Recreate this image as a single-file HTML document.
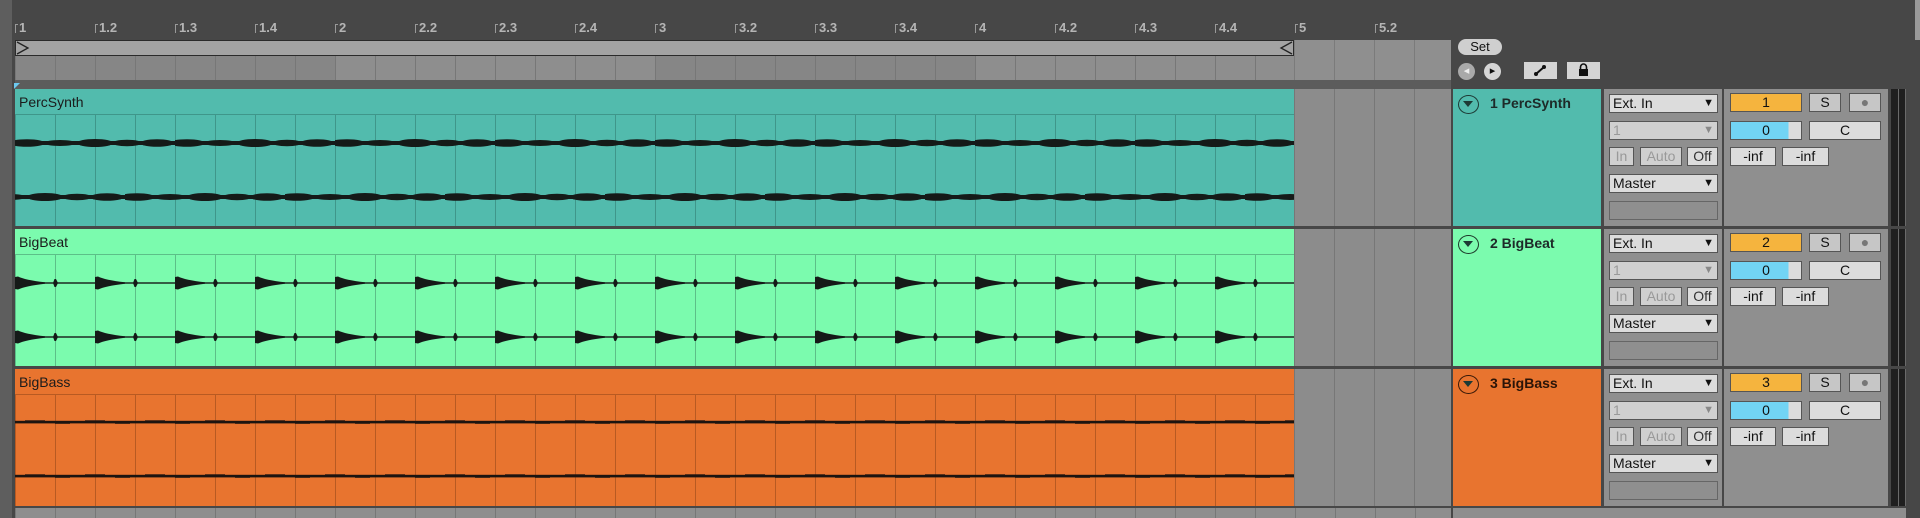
<!DOCTYPE html>
<html><head><meta charset="utf-8"><style>
*{margin:0;padding:0;box-sizing:border-box}
body{width:1920px;height:518px;background:#474747;position:relative;overflow:hidden;font-family:"Liberation Sans",sans-serif}
.a{position:absolute}
.rl{position:absolute;top:20px;font-size:13px;font-weight:bold;color:#b5b5b5;letter-spacing:0}
.rl:before{content:"";position:absolute;left:-4px;top:4px;width:1px;height:9px;background:#999}
.rl:after{content:"";position:absolute;left:-4px;top:4px;width:3px;height:1px;background:#999}
.track{position:absolute;left:15px;width:1279px;height:137px}
.hdr{position:absolute;left:0;top:0;width:100%;height:26px;font-size:14px;color:#1b1b1b;padding:5px 0 0 4px}
.grid{position:absolute;left:0;top:26px;width:100%;height:111px}
.ext{position:absolute;left:1294px;width:157px;height:137px;background:#8c8c8c;background-image:repeating-linear-gradient(90deg,#777 0 1px,transparent 1px 40px)}
.th{position:absolute;left:1453px;width:148px;height:137px}
.th .nm{position:absolute;left:37px;top:6px;font-size:14px;font-weight:bold;color:#1d2a28}
.th .ic{position:absolute;left:5px;top:6px;width:21px;height:19px;border:1.5px solid #1d3a35;border-radius:50%}
.th .ic:after{content:"";position:absolute;left:4px;top:5px;border-left:5px solid transparent;border-right:5px solid transparent;border-top:6px solid #1d3a35}
.io{position:absolute;left:1604px;width:118px;height:137px;background:#8f8f8f}
.mx{position:absolute;left:1724px;width:164px;height:137px;background:#8f8f8f}
.b{position:absolute;background:#dcdcdc;border:1px solid #555;font-size:14px;color:#111;height:19px;line-height:17px;padding-left:3px}
.b.dd:after{content:"▼";position:absolute;right:3px;top:0;font-size:11px;color:#111}
.b.dis{color:#999;background:#d0d0d0}
.b.dis:after{color:#888}
.c{text-align:center;padding:0}
.mt{position:absolute;left:1891px;width:15px;height:137px;background:#1f1f1f}
.mt:before,.mt:after{content:"";position:absolute;top:0;width:1px;height:100%;background:#6a6a6a}
.mt:before{left:7px}.mt:after{left:14px}
</style></head><body>
<div class="a" style="left:1915px;top:0;width:5px;height:40px;background:#9a9a9a"></div>
<div class="a" style="left:0;top:0;width:12px;height:518px;background:#5e5e5e"></div>
<div class="rl" style="left:19px">1</div><div class="rl" style="left:99px">1.2</div><div class="rl" style="left:179px">1.3</div><div class="rl" style="left:259px">1.4</div>
<div class="rl" style="left:339px">2</div><div class="rl" style="left:419px">2.2</div><div class="rl" style="left:499px">2.3</div><div class="rl" style="left:579px">2.4</div>
<div class="rl" style="left:659px">3</div><div class="rl" style="left:739px">3.2</div><div class="rl" style="left:819px">3.3</div><div class="rl" style="left:899px">3.4</div>
<div class="rl" style="left:979px">4</div><div class="rl" style="left:1059px">4.2</div><div class="rl" style="left:1139px">4.3</div><div class="rl" style="left:1219px">4.4</div>
<div class="rl" style="left:1299px">5</div><div class="rl" style="left:1379px">5.2</div>
<div class="a" style="left:15px;top:40px;width:1279px;height:16px;background:#a3a3a3;border:1px solid #2a2a2a"></div>
<svg class="a" style="left:15px;top:40px" width="1279" height="16"><path d="M2 2 L13 8 L2 14" fill="none" stroke="#222" stroke-width="1.3"/><path d="M1277 2 L1266 8 L1277 14" fill="none" stroke="#222" stroke-width="1.3"/></svg>
<div class="a" style="left:1294px;top:40px;width:157px;height:40px;background:#8f8f8f;background-image:repeating-linear-gradient(90deg,#7b7b7b 0 1px,transparent 1px 40px)"></div>
<div class="a" style="left:15px;top:56px;width:1279px;height:24px;background:#8e8e8e;background-image:repeating-linear-gradient(90deg,#777 0 1px,transparent 1px 40px)"></div>
<div class="a" style="left:15px;top:56px;width:320px;height:24px;background:#868686;background-image:repeating-linear-gradient(90deg,#777 0 1px,transparent 1px 40px)"></div>
<div class="a" style="left:655px;top:56px;width:320px;height:24px;background:#868686;background-image:repeating-linear-gradient(90deg,#777 0 1px,transparent 1px 40px)"></div>
<div class="a" style="left:15px;top:80px;width:1436px;height:9px;background:#5c5c5c"></div>
<div class="a" style="left:14px;top:83px;border-right:6px solid transparent;border-top:6px solid #6cc9f0"></div>
<div class="a" style="left:1458px;top:39px;width:44px;height:16px;background:#cfcfcf;border-radius:8px;font-size:13px;text-align:center;line-height:16px;color:#111">Set</div>
<div class="a" style="left:1458px;top:63px;width:17px;height:17px;border-radius:50%;background:#a9a9a9;color:#eee;font-size:11px;text-align:center;line-height:17px">◂</div>
<div class="a" style="left:1484px;top:63px;width:17px;height:17px;border-radius:50%;background:#d6d6d6;color:#111;font-size:11px;text-align:center;line-height:17px">▸</div>
<div class="a" style="left:1524px;top:62px;width:33px;height:17px;background:#d4d4d4"><svg width="33" height="17"><path d="M12 12 L20 5" stroke="#111" stroke-width="2"/><circle cx="12" cy="12" r="2" fill="#111"/><circle cx="20" cy="5" r="2" fill="#111"/></svg></div>
<div class="a" style="left:1567px;top:62px;width:33px;height:17px;background:#d4d4d4"><svg width="33" height="17"><rect x="12" y="7" width="9" height="7" fill="#111"/><path d="M13.5 7 V5 a3 3 0 0 1 6 0 V7" fill="none" stroke="#111" stroke-width="1.6"/></svg></div>

<svg width="0" height="0" style="position:absolute"><defs>
<pattern id="p1" width="160" height="20" patternUnits="userSpaceOnUse" x="0" y="-10">
<rect x="0" y="8" width="160" height="4" fill="#151a18"/>
<ellipse cx="12" cy="10" rx="18" ry="3.8" fill="#151a18"/><ellipse cx="45" cy="10" rx="16" ry="3" fill="#151a18"/><ellipse cx="80" cy="10" rx="18" ry="4" fill="#151a18"/><ellipse cx="112" cy="10" rx="15" ry="3.2" fill="#151a18"/><ellipse cx="142" cy="10" rx="17" ry="3.8" fill="#151a18"/>
</pattern>
<pattern id="p1b" width="160" height="20" patternUnits="userSpaceOnUse" x="-50" y="-10">
<rect x="0" y="8" width="160" height="4" fill="#151a18"/>
<ellipse cx="12" cy="10" rx="18" ry="3.8" fill="#151a18"/><ellipse cx="45" cy="10" rx="16" ry="3" fill="#151a18"/><ellipse cx="80" cy="10" rx="18" ry="4" fill="#151a18"/><ellipse cx="112" cy="10" rx="15" ry="3.2" fill="#151a18"/><ellipse cx="142" cy="10" rx="17" ry="3.8" fill="#151a18"/>
</pattern>
<pattern id="p2" width="80" height="30" patternUnits="userSpaceOnUse" y="-15">
<rect x="0" y="14.3" width="80" height="1.4" fill="#151a18"/>
<path d="M0 9 L3 8.5 Q10 12 30 14.3 L30 15.7 Q10 18 3 21.5 L0 21Z" fill="#151a18"/>
<path d="M39.5 11 L41 11 L43 15 L41 19 L39.5 19 L38 15Z" fill="#151a18"/>
</pattern>
<pattern id="p3" width="60" height="10" patternUnits="userSpaceOnUse" y="-5">
<rect x="0" y="3.8" width="60" height="2.6" fill="#1c1410"/><rect x="10" y="3.3" width="20" height="1" fill="#1c1410"/><rect x="40" y="5.8" width="15" height="1" fill="#1c1410"/>
</pattern>
</defs></svg>

<div class="track" style="top:89px;background:#52bbad">
 <div class="hdr" style="border-bottom:1px solid #3f968a">PercSynth</div>
 <div class="grid" style="background-image:repeating-linear-gradient(90deg,#3f968a 0 1px,transparent 1px 40px)">
 <svg class="a" style="left:0;top:0" width="1279" height="111"><g transform="translate(0,28)"><rect width="1279" height="20" y="-10" fill="url(#p1)"/></g><g transform="translate(0,82)"><rect width="1279" height="20" y="-10" fill="url(#p1b)"/></g></svg>
 </div>
</div>
<div class="ext" style="top:89px"></div>
<div class="th" style="top:89px;background:#52bbad"><div class="ic"></div><div class="nm">1 PercSynth</div></div>
<div class="io" style="top:89px">
 <div class="b dd" style="left:5px;top:5px;width:109px">Ext. In</div>
 <div class="b dd dis" style="left:5px;top:32px;width:109px">1</div>
 <div class="b dis c" style="left:5px;top:58px;width:25px">In</div><div class="b dis c" style="left:36px;top:58px;width:42px">Auto</div><div class="b c" style="left:83px;top:58px;width:31px;color:#333">Off</div>
 <div class="b dd" style="left:5px;top:85px;width:109px">Master</div>
 <div class="b" style="left:5px;top:112px;width:109px;background:#8f8f8f;border-color:#666"></div>
</div>
<div class="mx" style="top:89px">
 <div class="b c" style="left:6px;top:4px;width:72px;background:#f5b43e">1</div>
 <div class="b c" style="left:85px;top:4px;width:32px;background:#c6c6c6">S</div>
 <div class="b c" style="left:125px;top:4px;width:32px;background:#c6c6c6;color:#777">●</div>
 <div class="b c" style="left:6px;top:32px;width:72px;background:linear-gradient(90deg,#72d4f4 0 82%,#dcdcdc 82%)">0</div>
 <div class="b c" style="left:85px;top:32px;width:72px">C</div>
 <div class="b c" style="left:6px;top:58px;width:46px">-inf</div>
 <div class="b c" style="left:58px;top:58px;width:47px">-inf</div>
</div>
<div class="mt" style="top:89px"></div>

<div class="track" style="top:229px;background:#7bfbae">
 <div class="hdr" style="border-bottom:1px solid #5cbf88">BigBeat</div>
 <div class="grid" style="background-image:repeating-linear-gradient(90deg,#5cbf88 0 1px,transparent 1px 40px)">
 <svg class="a" style="left:0;top:0" width="1279" height="111"><g transform="translate(0,28)"><rect width="1279" height="30" y="-15" fill="url(#p2)"/></g><g transform="translate(0,82)"><rect width="1279" height="30" y="-15" fill="url(#p2)"/></g></svg>
 </div>
</div>
<div class="ext" style="top:229px"></div>
<div class="th" style="top:229px;background:#7bfbae"><div class="ic" style="border-color:#1d3a2a"></div><div class="nm">2 BigBeat</div></div>
<div class="io" style="top:229px">
 <div class="b dd" style="left:5px;top:5px;width:109px">Ext. In</div>
 <div class="b dd dis" style="left:5px;top:32px;width:109px">1</div>
 <div class="b dis c" style="left:5px;top:58px;width:25px">In</div><div class="b dis c" style="left:36px;top:58px;width:42px">Auto</div><div class="b c" style="left:83px;top:58px;width:31px;color:#333">Off</div>
 <div class="b dd" style="left:5px;top:85px;width:109px">Master</div>
 <div class="b" style="left:5px;top:112px;width:109px;background:#8f8f8f;border-color:#666"></div>
</div>
<div class="mx" style="top:229px">
 <div class="b c" style="left:6px;top:4px;width:72px;background:#f5b43e">2</div>
 <div class="b c" style="left:85px;top:4px;width:32px;background:#c6c6c6">S</div>
 <div class="b c" style="left:125px;top:4px;width:32px;background:#c6c6c6;color:#777">●</div>
 <div class="b c" style="left:6px;top:32px;width:72px;background:linear-gradient(90deg,#72d4f4 0 82%,#dcdcdc 82%)">0</div>
 <div class="b c" style="left:85px;top:32px;width:72px">C</div>
 <div class="b c" style="left:6px;top:58px;width:46px">-inf</div>
 <div class="b c" style="left:58px;top:58px;width:47px">-inf</div>
</div>
<div class="mt" style="top:229px"></div>

<div class="track" style="top:369px;background:#e8742f">
 <div class="hdr" style="border-bottom:1px solid #b85a22">BigBass</div>
 <div class="grid" style="background-image:repeating-linear-gradient(90deg,#b85a22 0 1px,transparent 1px 40px)">
 <svg class="a" style="left:0;top:0" width="1279" height="111"><g transform="translate(0,27)"><rect width="1279" height="10" y="-5" fill="url(#p3)"/></g><g transform="translate(0,81)"><rect width="1279" height="10" y="-5" fill="url(#p3)"/></g></svg>
 </div>
</div>
<div class="ext" style="top:369px"></div>
<div class="th" style="top:369px;background:#e8742f"><div class="ic" style="border-color:#3a1a08"></div><div class="nm" style="color:#2a1408">3 BigBass</div></div>
<div class="io" style="top:369px">
 <div class="b dd" style="left:5px;top:5px;width:109px">Ext. In</div>
 <div class="b dd dis" style="left:5px;top:32px;width:109px">1</div>
 <div class="b dis c" style="left:5px;top:58px;width:25px">In</div><div class="b dis c" style="left:36px;top:58px;width:42px">Auto</div><div class="b c" style="left:83px;top:58px;width:31px;color:#333">Off</div>
 <div class="b dd" style="left:5px;top:85px;width:109px">Master</div>
 <div class="b" style="left:5px;top:112px;width:109px;background:#8f8f8f;border-color:#666"></div>
</div>
<div class="mx" style="top:369px">
 <div class="b c" style="left:6px;top:4px;width:72px;background:#f5b43e">3</div>
 <div class="b c" style="left:85px;top:4px;width:32px;background:#c6c6c6">S</div>
 <div class="b c" style="left:125px;top:4px;width:32px;background:#c6c6c6;color:#777">●</div>
 <div class="b c" style="left:6px;top:32px;width:72px;background:linear-gradient(90deg,#72d4f4 0 82%,#dcdcdc 82%)">0</div>
 <div class="b c" style="left:85px;top:32px;width:72px">C</div>
 <div class="b c" style="left:6px;top:58px;width:46px">-inf</div>
 <div class="b c" style="left:58px;top:58px;width:47px">-inf</div>
</div>
<div class="mt" style="top:369px"></div>

<div class="a" style="left:15px;top:508px;width:1436px;height:10px;background:#8e8e8e;background-image:repeating-linear-gradient(90deg,#777 0 1px,transparent 1px 40px)"></div>
<div class="a" style="left:1453px;top:508px;width:453px;height:10px;background:#8e8e8e"></div>
</body></html>
